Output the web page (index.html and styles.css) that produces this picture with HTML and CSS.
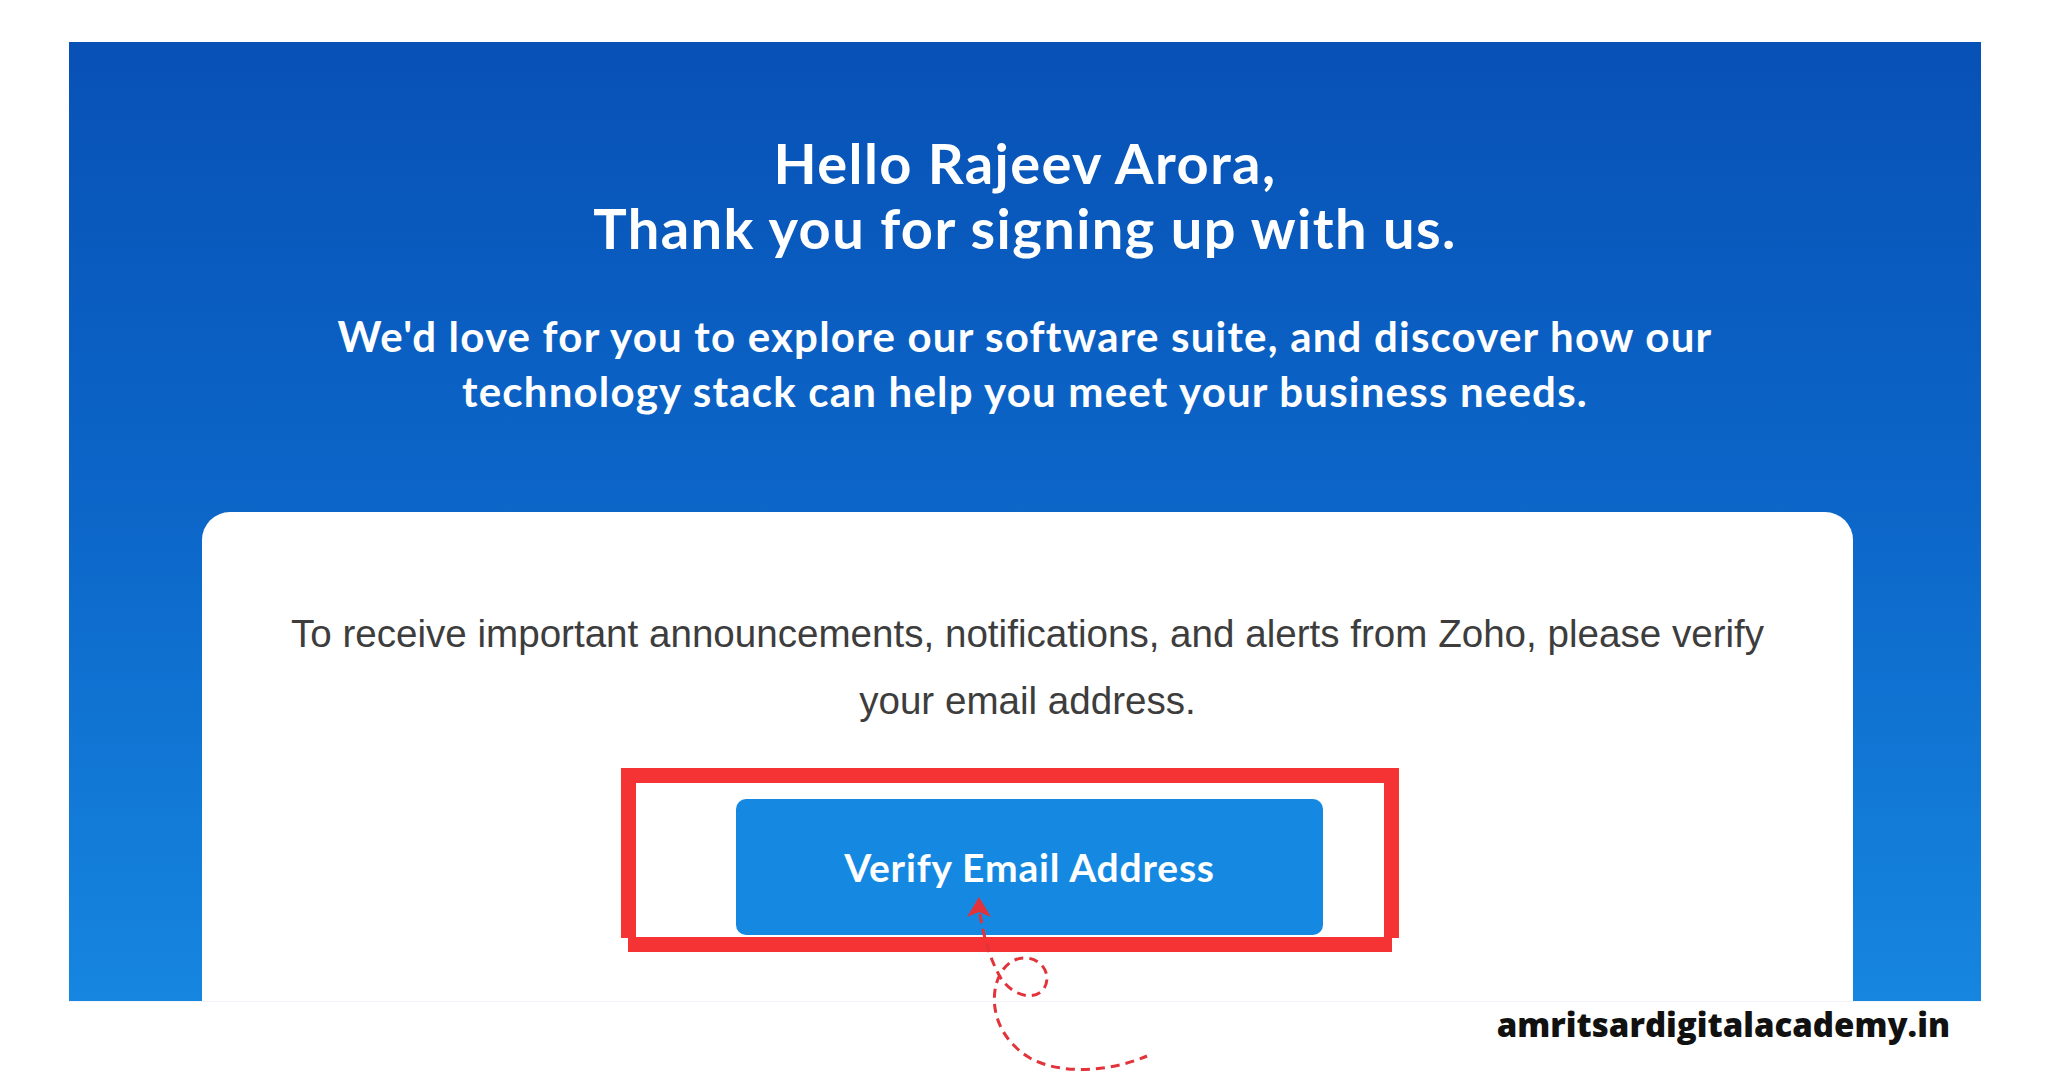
FILE: index.html
```html
<!DOCTYPE html>
<html lang="en">
<head>
<meta charset="utf-8">
<title>Verify Email</title>
<link rel="stylesheet" href="styles.css">
</head>
<body>
<div class="page">
  <section class="panel">
    <h1 class="title">Hello Rajeev Arora,<br>Thank you for signing up with us.</h1>
    <p class="lead">We'd love for you to explore our software suite, and discover how our<br>technology stack can help you meet your business needs.</p>
    <div class="card">
      <p class="card-text">To receive important announcements, notifications, and alerts from Zoho, please verify<br>your email address.</p>
      <a class="verify-btn" href="#">Verify Email Address</a>
      <div class="mark-box"></div>
      <div class="mark-bar"></div>
    </div>
  </section>
  <footer class="credit">amritsardigitalacademy.in</footer>
  <svg class="arrow" width="2048" height="1072" viewBox="0 0 2048 1072" xmlns="http://www.w3.org/2000/svg">
    <path d="M980,914 C984,940 991,960 999,975 C1008,992 1030,1003 1043,990 C1052,978 1045,960 1027,958 C1010,957 1000,970 996,985 C990,1010 1000,1040 1030,1058 C1060,1075 1110,1072 1147,1056" fill="none" stroke="#e2333a" stroke-width="3" stroke-dasharray="9 6"/>
    <polygon points="979,897 967,917 979,912 991,917" fill="#e2333a"/>
  </svg>
</div>
</body>
</html>
```
FILE: styles.css
```css
html, body {
  margin: 0;
  padding: 0;
  background: #ffffff;
}

.page {
  position: relative;
  width: 2048px;
  height: 1072px;
  overflow: hidden;
  padding-top: 42px;
  box-sizing: border-box;
}

.panel {
  margin-left: 69px;
  width: 1912px;
  height: 960px;
  box-sizing: border-box;
  background: linear-gradient(180deg, #0851b6 0%, #0c67c9 50%, #1686e0 100%);
  overflow: hidden;
  padding-top: 88px;
  border-bottom: 1px solid #f1f4f8;
}

.title {
  margin: 0;
  text-align: center;
  color: #ffffff;
  font-family: "Lato", "Open Sans", sans-serif;
  font-weight: 700;
  font-size: 56px;
  letter-spacing: 1.4px;
  line-height: 65px;
}

.lead {
  margin: 49px 0 0;
  text-align: center;
  color: #ffffff;
  font-family: "Lato", "Open Sans", sans-serif;
  font-weight: 700;
  font-size: 42px;
  letter-spacing: 1.2px;
  line-height: 55px;
}

.card {
  position: relative;
  margin: 93px 128px 0 133px;
  height: 600px;
  background: #ffffff;
  border-radius: 28px 28px 0 0;
  padding-top: 88px;
  box-sizing: border-box;
  text-align: center;
}

.card-text {
  margin: 0;
  color: #3d3d3d;
  font-family: "Liberation Sans", Arial, sans-serif;
  font-size: 38.6px;
  line-height: 67px;
}

.verify-btn {
  display: flex;
  align-items: center;
  justify-content: center;
  width: 587px;
  height: 136px;
  margin: 65px auto 0;
  position: relative;
  left: 2px;
  background: #1589e2;
  border-radius: 10px;
  color: #ffffff;
  text-decoration: none;
  font-family: "Lato", "Open Sans", sans-serif;
  font-weight: 700;
  font-size: 39px;
  letter-spacing: 0.8px;
}

.mark-box {
  position: absolute;
  left: 419px;
  top: 256px;
  width: 778px;
  height: 170px;
  box-sizing: border-box;
  border: 15px solid #f53335;
  border-bottom: 0;
}

.mark-bar {
  position: absolute;
  left: 426px;
  top: 425px;
  width: 764px;
  height: 15px;
  background: #f53335;
}

.credit {
  margin-top: 3px;
  padding-right: 98px;
  text-align: right;
  color: #111111;
  font-family: "Open Sans", "Lato", sans-serif;
  font-weight: 800;
  font-size: 33px;
  letter-spacing: 0;
  line-height: 40px;
}

.arrow {
  position: absolute;
  left: 0;
  top: 0;
  pointer-events: none;
}
```
